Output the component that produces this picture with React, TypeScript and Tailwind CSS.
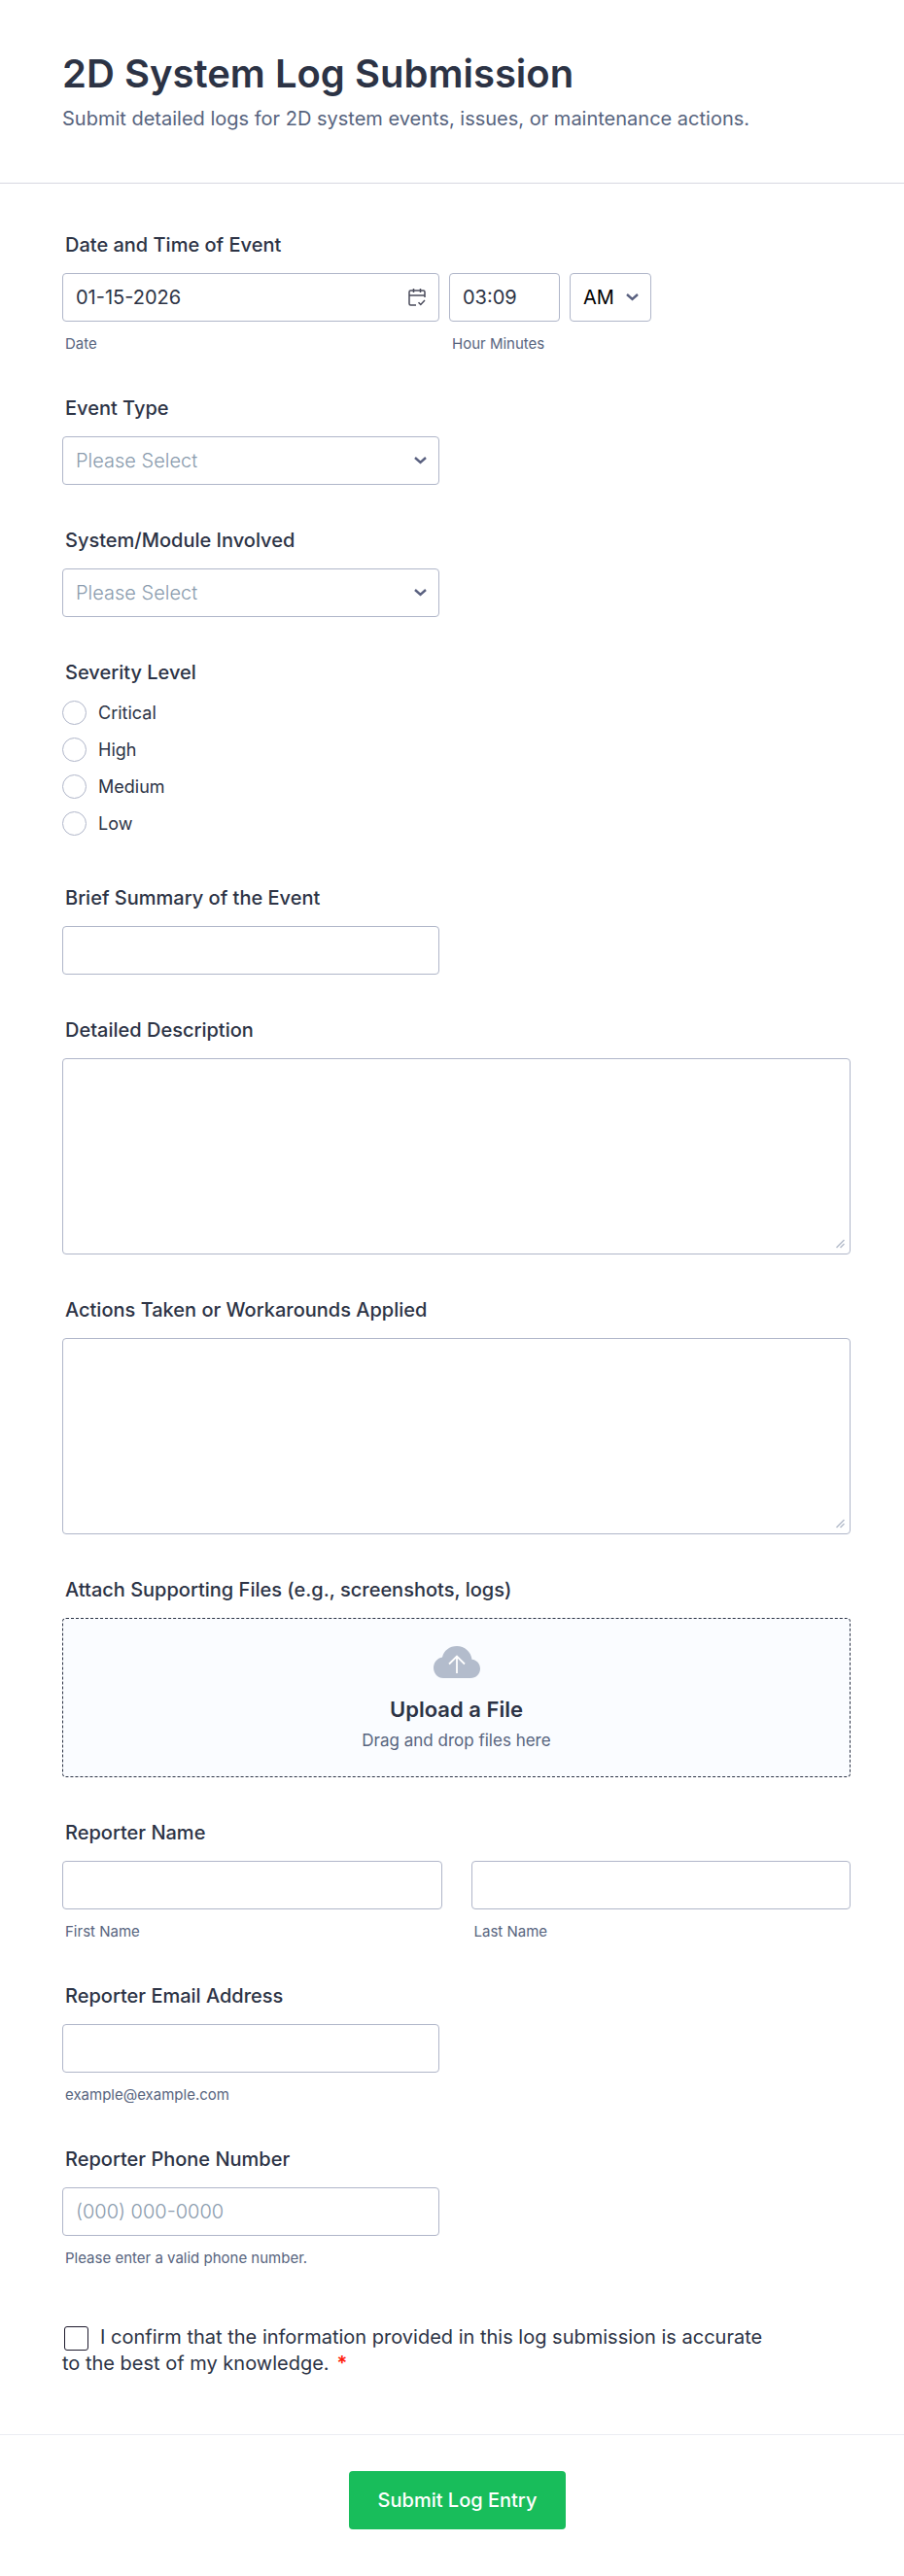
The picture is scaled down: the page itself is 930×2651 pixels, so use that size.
import { useState, type ReactNode } from 'react'

const inputClass =
  'h-[50px] w-full rounded border border-[#b0b6c9] bg-white px-[13px] text-xl font-normal text-[#2c3345] outline-none placeholder:font-light placeholder:text-[#8a9bad] focus:border-[#2e69ff]'

const labelClass = 'mb-[17px] block pl-[3px] text-xl leading-6 font-medium text-[#2c3345]'

const severities = ['Critical', 'High', 'Medium', 'Low']
const eventTypes = ['System Error', 'Warning', 'Maintenance', 'Update']
const modules = ['Rendering Engine', 'Physics', 'Input', 'Networking']

function Chevron() {
  return (
    <svg
      viewBox="0 0 13 9"
      className="pointer-events-none absolute top-1/2 right-[13px] h-[9px] w-[13px] -translate-y-1/2"
      fill="none"
      stroke="#5a6180"
      strokeWidth="2.4"
      aria-hidden="true"
    >
      <path d="M1 1.5 6.5 6.5 12 1.5" />
    </svg>
  )
}

function CalendarIcon() {
  return (
    <svg
      viewBox="0 0 18 20"
      className="h-5 w-[18px]"
      fill="none"
      stroke="#4a4b5b"
      strokeWidth="1.5"
      aria-hidden="true"
    >
      <path d="M17 10V4.5a1.5 1.5 0 0 0-1.5-1.5h-13A1.5 1.5 0 0 0 1 4.5v12A1.5 1.5 0 0 0 2.5 18H8" />
      <path d="M1 8h16M5.5 1v4M12.5 1v4M10.5 15.2l2.3 2.3L17 13" />
    </svg>
  )
}

function CloudIcon() {
  return (
    <svg viewBox="0 0 48 33" className="h-[33px] w-12" aria-hidden="true">
      <path
        d="M10 33C4.5 33 0 28.3 0 22.5 0 16.8 3.7 12.5 9 11.5 10.6 4.700 16.5 0 24 0c8 0 14.5 6 15.5 13.700C44.5 14.2 48 18.3 48 23.2 48 28.7 43.6 33 38 33Z"
        fill="#b3bccc"
      />
      <path d="M24 28V10.5M16 18.5 24 10.5l8 8" fill="none" stroke="#fff" strokeWidth="1.8" />
    </svg>
  )
}

function SubLabel({ htmlFor, children }: { htmlFor: string; children: ReactNode }) {
  return (
    <label htmlFor={htmlFor} className="mt-[14px] block pl-[3px] text-[15px] leading-[18px] text-[#57647e]">
      {children}
    </label>
  )
}

function SelectField({ id, label, options }: { id: string; label: string; options: string[] }) {
  return (
    <div>
      <label htmlFor={id} className={labelClass}>
        {label}
      </label>
      <div className="relative max-w-[388px]">
        <select
          id={id}
          defaultValue=""
          className="h-[50px] w-full appearance-none rounded border border-[#b0b6c9] bg-white px-[13px] text-xl font-light text-[#8a9bad] outline-none"
        >
          <option value="">Please Select</option>
          {options.map((o) => (
            <option key={o}>{o}</option>
          ))}
        </select>
        <Chevron />
      </div>
    </div>
  )
}

function TextareaField({ id, label }: { id: string; label: string }) {
  return (
    <div>
      <label htmlFor={id} className={labelClass}>
        {label}
      </label>
      <div className="relative">
        <textarea
          id={id}
          className="block h-[202px] w-full resize-none rounded border border-[#b0b6c9] bg-white p-3 text-xl text-[#2c3345] outline-none"
        />
        <svg
          viewBox="0 0 9 10"
          className="pointer-events-none absolute right-1.5 bottom-1.5 h-[10px] w-[9px]"
          fill="none"
          stroke="#b4bccb"
          strokeWidth="1.5"
          aria-hidden="true"
        >
          <path d="M.5 9 8.500 1M4.5 9l4-4" />
        </svg>
      </div>
    </div>
  )
}

export default function App() {
  const [severity, setSeverity] = useState('')
  const [confirmed, setConfirmed] = useState(false)

  return (
    <form
      onSubmit={(e) => e.preventDefault()}
      className="min-h-screen bg-white font-['Inter',sans-serif] text-[#2c3345]"
    >
      <header className="border-b border-[#d7d8e1] px-16 pt-[51px] pb-[54px]">
        <h1 className="text-[40px] leading-[50px] font-semibold">2D System Log Submission</h1>
        <p className="mt-[9px] text-xl leading-6 font-normal text-[#57647e]">
          Submit detailed logs for 2D system events, issues, or maintenance actions.
        </p>
      </header>

      <div className="flex flex-col gap-[45px] pt-[51px] pr-[55px] pb-[59px] pl-16">
        <div>
          <label htmlFor="date" className={labelClass}>
            Date and Time of Event
          </label>
          <div className="flex gap-[10px]">
            <div className="w-[388px]">
              <div className="relative">
                <input id="date" defaultValue="01-15-2026" className={inputClass} />
                <button type="button" aria-label="Choose date" className="absolute top-[15px] right-[14px]">
                  <CalendarIcon />
                </button>
              </div>
              <SubLabel htmlFor="date">Date</SubLabel>
            </div>
            <div className="w-[114px]">
              <input id="time" defaultValue="03:09" className={inputClass} />
              <SubLabel htmlFor="time">Hour Minutes</SubLabel>
            </div>
            <div className="relative h-[50px] w-[84px]">
              <select
                aria-label="AM or PM"
                className="h-[50px] w-full appearance-none rounded border border-[#b0b6c9] bg-white px-[13px] text-xl text-black outline-none"
              >
                <option>AM</option>
                <option>PM</option>
              </select>
              <Chevron />
            </div>
          </div>
        </div>

        <SelectField id="event-type" label="Event Type" options={eventTypes} />
        <SelectField id="module" label="System/Module Involved" options={modules} />

        <fieldset>
          <legend className={labelClass}>Severity Level</legend>
          <div className="flex flex-col gap-[13px] pb-[7px]">
            {severities.map((s) => (
              <label key={s} className="flex items-center gap-3 text-lg leading-[25px]">
                <input
                  type="radio"
                  name="severity"
                  checked={severity === s}
                  onChange={() => setSeverity(s)}
                  className="size-[25px] appearance-none rounded-full border border-[#b0b6c9] bg-white checked:border-8 checked:border-[#2e69ff]"
                />
                {s}
              </label>
            ))}
          </div>
        </fieldset>

        <div>
          <label htmlFor="summary" className={labelClass}>
            Brief Summary of the Event
          </label>
          <div className="max-w-[388px]">
            <input id="summary" className={inputClass} />
          </div>
        </div>

        <TextareaField id="description" label="Detailed Description" />
        <TextareaField id="actions" label="Actions Taken or Workarounds Applied" />

        <div>
          <label htmlFor="files" className={labelClass}>
            Attach Supporting Files (e.g., screenshots, logs)
          </label>
          <label
            htmlFor="files"
            className="flex h-[164px] cursor-pointer flex-col items-center rounded border border-dashed border-[#2c3345] bg-[#fafcff] pt-7"
          >
            <CloudIcon />
            <span className="mt-5 text-[22px] leading-6 font-semibold">Upload a File</span>
            <span className="mt-2 text-[17px] leading-6 text-[#57647e]">Drag and drop files here</span>
            <input id="files" type="file" multiple className="sr-only" />
          </label>
        </div>

        <div>
          <label htmlFor="first-name" className={labelClass}>
            Reporter Name
          </label>
          <div className="grid grid-cols-2 gap-[30px]">
            <div>
              <input id="first-name" className={inputClass} />
              <SubLabel htmlFor="first-name">First Name</SubLabel>
            </div>
            <div>
              <input id="last-name" className={inputClass} />
              <SubLabel htmlFor="last-name">Last Name</SubLabel>
            </div>
          </div>
        </div>

        <div>
          <label htmlFor="email" className={labelClass}>
            Reporter Email Address
          </label>
          <div className="max-w-[388px]">
            <input id="email" type="email" className={inputClass} />
            <SubLabel htmlFor="email">example@example.com</SubLabel>
          </div>
        </div>

        <div>
          <label htmlFor="phone" className={labelClass}>
            Reporter Phone Number
          </label>
          <div className="max-w-[388px]">
            <input id="phone" type="tel" placeholder="(000) 000-0000" className={inputClass} />
            <SubLabel htmlFor="phone">Please enter a valid phone number.</SubLabel>
          </div>
        </div>

        <div className="max-w-[730px] pt-[14px] text-xl leading-[27px]">
          <input
            id="confirm"
            type="checkbox"
            required
            checked={confirmed}
            onChange={(e) => setConfirmed(e.target.checked)}
            className="mr-3 ml-[2px] size-[25px] appearance-none rounded-[3px] border border-[#1f1b2e] bg-white align-middle checked:bg-[#2e69ff]"
          />
          <label htmlFor="confirm">
            I confirm that the information provided in this log submission is accurate to the best of my knowledge.
          </label>
          <span className="ml-2 font-semibold text-[#ff1a0a]">*</span>
        </div>
      </div>

      <footer className="flex justify-center border-t border-[#ecedf3] pt-[37px] pb-12 pl-[11px]">
        <button
          type="submit"
          className="h-[60px] min-w-[223px] rounded bg-[#18bd5b] px-7 text-xl font-medium text-white"
        >
          Submit Log Entry
        </button>
      </footer>
    </form>
  )
}
